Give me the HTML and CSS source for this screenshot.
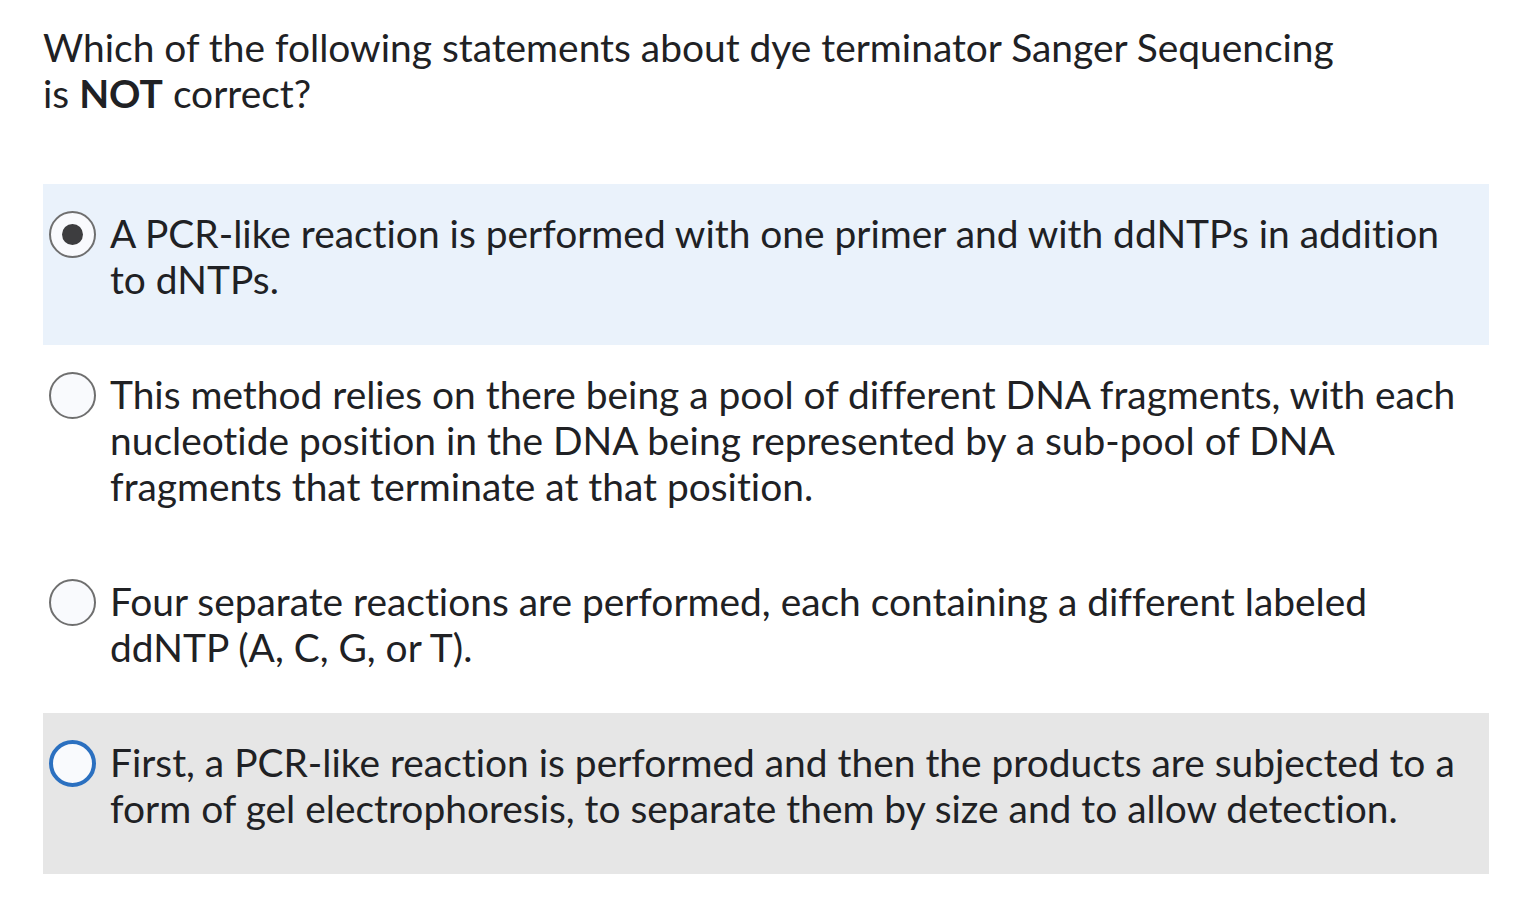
FILE: index.html
```html
<!DOCTYPE html>
<html lang="en">
<head>
<meta charset="utf-8">
<title>Quiz question</title>
<link rel="stylesheet" href="styles.css">
</head>
<body>
<div class="quiz">
  <p class="question">Which of the following statements about dye terminator Sanger Sequencing is <strong>NOT</strong> correct?</p>
  <div class="answers">
    <label class="answer selected">
      <span class="radio checked"></span>
      <span class="answer-text">A PCR-like reaction is performed with one primer and with ddNTPs in addition to dNTPs.</span>
    </label>
    <label class="answer">
      <span class="radio"></span>
      <span class="answer-text">This method relies on there being a pool of different DNA fragments, with each nucleotide position in the DNA being represented by a sub-pool of DNA fragments that terminate at that position.</span>
    </label>
    <label class="answer">
      <span class="radio"></span>
      <span class="answer-text">Four separate reactions are performed, each containing a different labeled ddNTP (A, C, G, or T).</span>
    </label>
    <label class="answer hovered">
      <span class="radio focused"></span>
      <span class="answer-text">First, a PCR-like reaction is performed and then the products are subjected to a form of gel electrophoresis, to separate them by size and to allow detection.</span>
    </label>
  </div>
</div>
</body>
</html>
```
FILE: styles.css
```css
html, body {
  margin: 0;
  padding: 0;
  background: #ffffff;
}
body {
  font-family: Lato, "Open Sans", sans-serif;
  color: #202124;
  font-size: 38.9px;
  line-height: 46px;
  font-variant-ligatures: none;
}
.quiz {
  padding: 24px 0 0 43px;
  width: 1446px;
}
.question {
  margin: 0;
  width: 1318px;
}
.question strong {
  font-weight: 700;
}
.answers {
  margin-top: 68px;
  display: flex;
  flex-direction: column;
}
.answer {
  display: flex;
  align-items: flex-start;
  gap: 14px;
  padding: 26px 20px 43px 6px;
}
.answer.selected {
  background: #eaf2fb;
}
.answer.hovered {
  background: #e6e6e6;
}
.radio {
  flex: 0 0 auto;
  box-sizing: border-box;
  width: 47px;
  height: 47px;
  margin-top: 1px;
  border-radius: 50%;
  border: 2px solid #6f6f6f;
  background: #f9fafd;
  display: flex;
  align-items: center;
  justify-content: center;
}
.radio.checked::after {
  content: "";
  width: 21px;
  height: 21px;
  border-radius: 50%;
  background: #3d3d3f;
}
.radio.focused {
  border: 4px solid #2b70c0;
}
.answer-text {
  flex: 1 1 auto;
}
```
